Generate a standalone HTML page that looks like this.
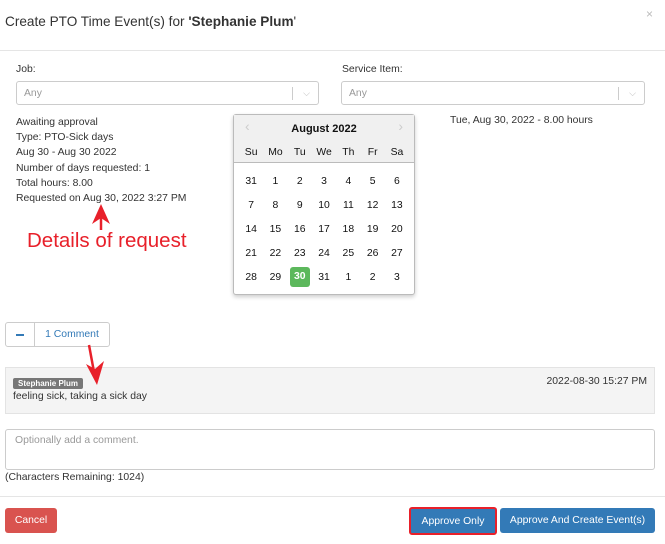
<!DOCTYPE html>
<html><head><style>
body{margin:0;width:665px;height:544px;background:#fff;font-family:"Liberation Sans",sans-serif;font-size:10.4px;color:#333;position:relative;overflow:hidden}
.a{position:absolute}
.sel{position:absolute;height:24px;border:1px solid #ccc;border-radius:3px;box-sizing:border-box;color:#999;font-size:10.4px;line-height:24px;padding-left:7px}
.sel .s{position:absolute;right:25px;top:5px;height:13px;border-left:1px solid #ccc}
.sel .c{position:absolute;right:8px;top:-1px;color:#bbb;font-size:9px}
.cal td{width:24.3px;text-align:center;height:24px;font-size:10.4px;color:#111;padding:0}
.btn{position:absolute;color:#fff;font-size:10.4px;display:flex;align-items:center;justify-content:center;border-radius:3px;box-sizing:border-box}
</style></head><body>
<div class="a" style="left:5px;top:14px;font-size:13.6px;color:#333">Create PTO Time Event(s) for <b>'Stephanie Plum</b>'</div>
<div class="a" style="left:646px;top:7px;color:#bbb;font-size:12px">×</div>
<div class="a" style="left:0;top:50px;width:665px;border-top:1px solid #e5e5e5"></div>
<div class="a" style="left:16px;top:64px">Job:</div>
<div class="a" style="left:342px;top:64px">Service Item:</div>
<div class="sel" style="left:16px;top:81px;width:303px">Any<span class="s"></span><span class="c">⌵</span></div>
<div class="sel" style="left:341px;top:81px;width:304px">Any<span class="s"></span><span class="c">⌵</span></div>
<div class="a" style="left:16px;top:115px;line-height:15.2px">Awaiting approval<br>Type: PTO-Sick days<br>Aug 30 - Aug 30 2022<br>Number of days requested: 1<br>Total hours: 8.00<br>Requested on Aug 30, 2022 3:27 PM</div>
<div class="a" style="left:450px;top:115px">Tue, Aug 30, 2022 - 8.00 hours</div>
<div class="a" style="left:233px;top:114px;width:182px;height:181px;border:1px solid #bbb;box-sizing:border-box;border-radius:3px;box-shadow:0 2px 4px rgba(0,0,0,.2);background:#fff">
 <div style="background:#f0f0f0;height:47px;border-bottom:1px solid #bbb;position:relative">
  <div class="a" style="left:11px;top:3px;color:#ccc;font-size:14px">‹</div>
  <div class="a" style="right:11px;top:3px;color:#ccc;font-size:14px">›</div>
  <div class="a" style="left:0;width:180px;top:8px;text-align:center;font-weight:bold;font-size:11px;color:#111">August 2022</div>
  <table class="cal a" style="left:5px;top:25px;border-collapse:collapse"><tr><td style="height:18px">Su</td><td>Mo</td><td>Tu</td><td>We</td><td>Th</td><td>Fr</td><td>Sa</td></tr></table>
 </div>
 <table class="cal a" style="left:5px;top:54px;border-collapse:collapse">
 <tr><td>31</td><td>1</td><td>2</td><td>3</td><td>4</td><td>5</td><td>6</td></tr>
 <tr><td>7</td><td>8</td><td>9</td><td>10</td><td>11</td><td>12</td><td>13</td></tr>
 <tr><td>14</td><td>15</td><td>16</td><td>17</td><td>18</td><td>19</td><td>20</td></tr>
 <tr><td>21</td><td>22</td><td>23</td><td>24</td><td>25</td><td>26</td><td>27</td></tr>
 <tr><td>28</td><td>29</td><td><span style="display:inline-block;background:#5cb85c;color:#fff;font-weight:bold;width:20px;height:20px;line-height:20px;border-radius:3px">30</span></td><td>31</td><td>1</td><td>2</td><td>3</td></tr>
 </table>
</div>
<div class="a" style="left:27px;top:229px;color:#e8202a;font-size:20.5px">Details of request</div>
<div class="a" style="left:5px;top:322px;width:30px;height:25px;border:1px solid #ccc;border-radius:3px 0 0 3px;box-sizing:border-box"><div style="margin:11px 0 0 10px;width:8px;height:2px;background:#337ab7"></div></div>
<div class="a" style="left:34px;top:322px;width:76px;height:25px;border:1px solid #ccc;border-radius:0 3px 3px 0;box-sizing:border-box;color:#337ab7;line-height:23px;text-align:center">1 Comment</div>
<div class="a" style="left:5px;top:367px;width:650px;height:47px;background:#f4f4f4;border:1px solid #e3e3e3;box-sizing:border-box"></div>
<div class="a" style="left:13px;top:378px;background:#777;color:#fff;font-size:8px;font-weight:bold;padding:1px 5px;border-radius:2px">Stephanie Plum</div>
<div class="a" style="left:13px;top:391px">feeling sick, taking a sick day</div>
<div class="a" style="right:18px;top:376px">2022-08-30 15:27 PM</div>
<div class="a" style="left:5px;top:429px;width:650px;height:41px;border:1px solid #ccc;border-radius:3px;box-sizing:border-box;color:#999;padding:5px 0 0 9px">Optionally add a comment.</div>
<div class="a" style="left:5px;top:472px">(Characters Remaining: 1024)</div>
<div class="a" style="left:0;top:496px;width:665px;border-top:1px solid #e5e5e5"></div>
<div class="btn" style="left:5px;top:508px;width:52px;height:25px;background:#d9534f">Cancel</div>
<div class="btn" style="left:409px;top:507px;width:88px;height:28px;background:#337ab7;border:2px solid #e8202a">Approve Only</div>
<div class="btn" style="left:500px;top:508px;width:155px;height:25px;background:#337ab7">Approve And Create Event(s)</div>
<svg class="a" style="left:0;top:0" width="665" height="544">
<line x1="101" y1="230" x2="101" y2="214" stroke="#e8202a" stroke-width="2.5"/>
<polygon points="101,204 92,224 101,218 110,224" fill="#e8202a"/>
<line x1="89" y1="345" x2="94" y2="372" stroke="#e8202a" stroke-width="2.5"/>
<polygon points="97,385 86,364 95,369 104,361" fill="#e8202a"/>
</svg>
</body></html>
